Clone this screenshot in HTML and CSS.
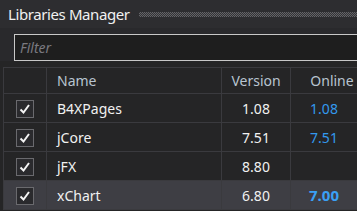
FILE: index.html
```html
<!DOCTYPE html>
<html lang="en">
<head>
    <meta charset="UTF-8">
    <meta name="viewport" content="width=device-width, initial-scale=1.0">
    <title>Libraries Manager</title>
    <link rel="stylesheet" href="styles.css">
</head>
<body>
    <div class="panel">
        <div class="titlebar">
            <span class="title">Libraries Manager</span>
            <span class="grip"></span>
        </div>
        <div class="filter-row">
            <div class="filter">Filter</div>
        </div>
        <table class="libs">
            <colgroup>
                <col class="col-check">
                <col class="col-name">
                <col class="col-version">
                <col class="col-online">
            </colgroup>
            <thead>
                <tr>
                    <th></th>
                    <th class="name">Name</th>
                    <th>Version</th>
                    <th>Online</th>
                </tr>
            </thead>
            <tbody>
                <tr>
                    <td><svg class="check" viewBox="0 0 18 18"><rect x="0.5" y="0.5" width="17" height="17"/><path d="M4.5 9.5 L7.5 12.5 L13 5"/></svg></td>
                    <td class="name">B4XPages</td>
                    <td>1.08</td>
                    <td class="online">1.08</td>
                </tr>
                <tr>
                    <td><svg class="check" viewBox="0 0 18 18"><rect x="0.5" y="0.5" width="17" height="17"/><path d="M4.5 9.5 L7.5 12.5 L13 5"/></svg></td>
                    <td class="name">jCore</td>
                    <td>7.51</td>
                    <td class="online">7.51</td>
                </tr>
                <tr>
                    <td><svg class="check" viewBox="0 0 18 18"><rect x="0.5" y="0.5" width="17" height="17"/><path d="M4.5 9.5 L7.5 12.5 L13 5"/></svg></td>
                    <td class="name">jFX</td>
                    <td>8.80</td>
                    <td class="online"></td>
                </tr>
                <tr class="selected">
                    <td><svg class="check" viewBox="0 0 18 18"><rect x="0.5" y="0.5" width="17" height="17"/><path d="M4.5 9.5 L7.5 12.5 L13 5"/></svg></td>
                    <td class="name">xChart</td>
                    <td>6.80</td>
                    <td class="online newer">7.00</td>
                </tr>
            </tbody>
        </table>
    </div>
</body>
</html>
```

FILE: styles.css
```css
body {
    margin: 0;
    padding: 0;
    background: #252526;
    font-family: "Noto Sans", "Open Sans", sans-serif;
    overflow: hidden;
}

.panel {
    width: 357px;
    height: 211px;
    background: #252526;
}

.titlebar {
    height: 28px;
    background: #2d2d30;
    display: flex;
    align-items: center;
    padding-left: 8px;
}

.title {
    color: #f1f1f1;
    font-size: 15px;
    letter-spacing: -0.4px;
    white-space: nowrap;
}

.grip {
    flex: 1;
    height: 5px;
    margin-left: 9px;
    margin-top: 1px;
    background-image: repeating-conic-gradient(#646468 0 25%, #333336 0 50%);
    background-size: 2px 2px;
}

.filter-row {
    padding: 6px 0 0 14px;
    background: #29292c;
    height: 33px;
    box-sizing: border-box;
}

.filter {
    height: 27px;
    box-sizing: border-box;
    border: 1px solid #c8c8c8;
    border-right: none;
    background: #1e1e1e;
    color: #7a7a80;
    font-style: italic;
    font-size: 14px;
    line-height: 25px;
    padding-left: 5px;
}

.libs {
    margin-left: 3px;
    margin-top: 6px;
    width: 370px;
    border-collapse: collapse;
    table-layout: fixed;
    font-size: 14px;
    color: #f1f1f1;
}

.col-check { width: 43px; }
.col-name { width: 175px; }
.col-version { width: 69px; }
.col-online { width: 83px; }

.libs th,
.libs td {
    border: 1px solid #3a3a3e;
    padding: 0;
    text-align: center;
    white-space: nowrap;
}

.libs th {
    height: 25px;
    font-weight: normal;
    color: #b8c4d0;
    background: #252526;
}

.libs td {
    height: 28px;
}

.libs .name {
    text-align: left;
    padding-left: 10px;
}

.online {
    color: #3399ee;
    padding-right: 16px !important;
}

.newer {
    font-weight: bold;
    font-size: 15px;
    color: #3aa0f5;
}

.selected td {
    background: #3e3e44;
}

.check {
    display: inline-block;
    width: 18px;
    height: 18px;
    vertical-align: middle;
}

.check rect {
    fill: #2a2a2d;
    stroke: #6a6a6e;
}

.check path {
    fill: none;
    stroke: #f4f4f4;
    stroke-width: 2;
}
```
